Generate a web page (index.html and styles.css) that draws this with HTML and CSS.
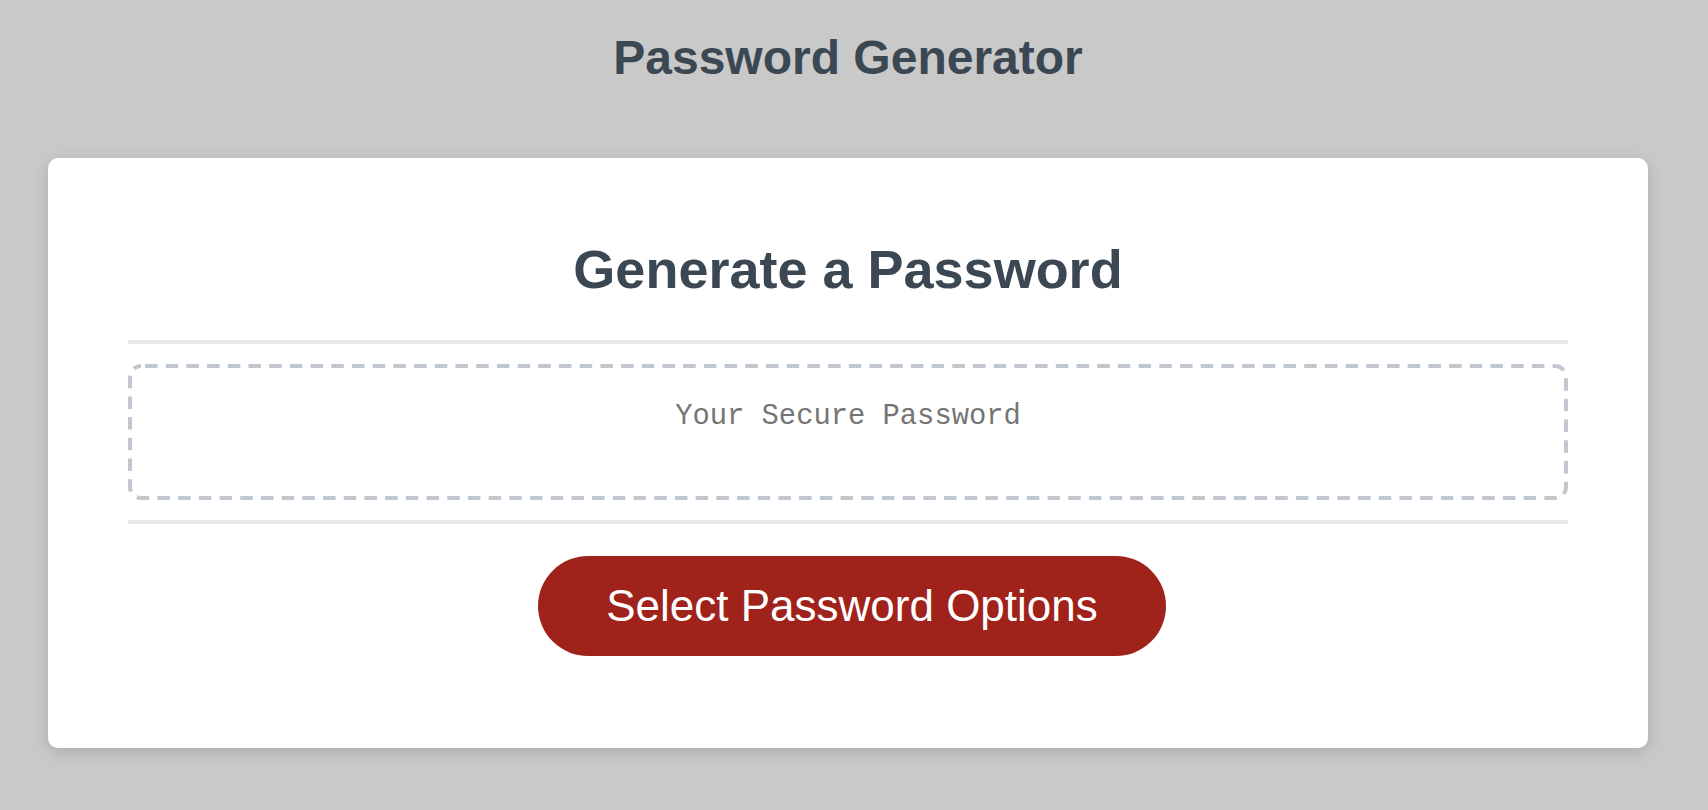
FILE: index.html
```html
<!DOCTYPE html>
<html lang="en">
<head>
<meta charset="UTF-8">
<title>Password Generator</title>
<link rel="stylesheet" href="styles.css">
</head>
<body>
<div class="wrapper">
  <header class="page-header">
    <h1 class="page-title">Password Generator</h1>
  </header>
  <div class="card">
    <div class="card-header">
      <h2 class="card-title">Generate a Password</h2>
    </div>
    <div class="card-body">
      <div class="password-box">
        <textarea readonly class="password" placeholder="Your Secure Password" aria-label="Generated Password"></textarea>
        <svg class="password-border" aria-hidden="true"><rect class="password-border-rect" x="2" y="2" rx="11" ry="11"></rect></svg>
      </div>
    </div>
    <div class="card-footer">
      <button class="btn">Select Password Options</button>
    </div>
  </div>
</div>
</body>
</html>
```

FILE: styles.css
```css
*, *::before, *::after { box-sizing: border-box; }

html, body {
  margin: 0;
  padding: 0;
}

body {
  background: #c9c9c9;
  font-family: "Liberation Sans", Arial, Helvetica, sans-serif;
  color: #3b4753;
}

.wrapper {
  padding: 30px 60px 40px 48px;
}

.page-header {
  text-align: center;
  margin-bottom: 73px;
}

.page-title {
  margin: 0;
  font-size: 48px;
  line-height: 55px;
  font-weight: 700;
  color: #3b4753;
}

.card {
  background: #ffffff;
  border-radius: 10px;
  box-shadow: rgba(0, 0, 0, 0.15) 0 4px 16px 0;
  max-width: 1600px;
  margin: 0 auto;
  padding: 60px 80px;
  font-size: 36px;
  color: #3b4753;
}

.card-header::after {
  content: "";
  display: block;
  height: 4px;
  background: #e7e9eb;
}

.card-title {
  margin: 20px 0 40px;
  font-size: 54px;
  line-height: 62px;
  font-weight: 700;
  text-align: center;
}

.password-box {
  position: relative;
  margin: 20px 0;
  height: 136px;
}

.password {
  display: block;
  width: 100%;
  height: 100%;
  margin: 0;
  padding: 32px 30px 0;
  border: 4px solid transparent;
  border-radius: 12px;
  font-family: "Courier New", "Nimbus Mono PS", "Nimbus Mono L", FreeMono, "Liberation Mono", monospace;
  font-size: 28.8px;
  text-align: center;
  resize: none;
  overflow: hidden;
  background: #fff;
  color: #3b4753;
  outline: none;
}

.password::placeholder {
  color: #757575;
  opacity: 1;
}

.password-border {
  position: absolute;
  left: 0;
  top: 0;
  width: 100%;
  height: 100%;
  pointer-events: none;
  overflow: visible;
}

.password-border-rect {
  width: calc(100% - 4px);
  height: calc(100% - 4px);
  fill: none;
  stroke: #c0c7cf;
  stroke-width: 4px;
  stroke-dasharray: 12.5 8.2;
  stroke-dashoffset: -4;
}

.card-footer {
  text-align: center;
}

.card-footer::before {
  content: "";
  display: block;
  height: 4px;
  background: #e7e9eb;
}

.btn {
  display: inline-block;
  border: none;
  background: #9f221b;
  color: #ffffff;
  border-radius: 50px;
  font-family: "Liberation Sans", Arial, Helvetica, sans-serif;
  font-size: 44px;
  line-height: 44px;
  padding: 28px 68px;
  margin: 32px 32px 32px 40px;
  vertical-align: top;
  cursor: pointer;
}
```
